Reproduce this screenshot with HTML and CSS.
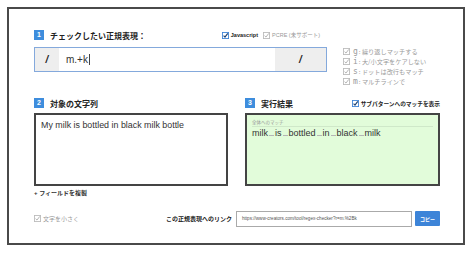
FILE: index.html
```html
<!DOCTYPE html>
<html lang="ja">
<head>
    <meta charset="UTF-8">
    <meta name="viewport" content="width=device-width, initial-scale=1.0">
    <title>正規表現チェッカー</title>
    <link rel="stylesheet" href="styles.css">
</head>
<body>
    <div class="panel">
        <!-- 1: 正規表現 -->
        <div class="top-row">
            <div class="sec1">
                <div class="sec-head">
                    <span class="badge">1</span>
                    <span class="head-title">チェックしたい正規表現：</span>
                    <span class="engines">
                        <label class="chk chk-on">
                            <svg viewBox="0 0 8 8"><rect x="0.5" y="0.5" width="7" height="7" fill="#fff" stroke="#3f84d6"/><path d="M1.8 4.2 L3.4 5.8 L6.6 1.6" fill="none" stroke="#1d3f6e" stroke-width="1.3"/></svg>
                            <b>Javascript</b>
                        </label>
                        <label class="chk chk-off">
                            <svg viewBox="0 0 8 8"><rect x="0.5" y="0.5" width="7" height="7" fill="#fff" stroke="#bbb"/><path d="M1.8 4.2 L3.4 5.8 L6.6 1.6" fill="none" stroke="#aaa" stroke-width="1"/></svg>
                            PCRE (未サポート)
                        </label>
                    </span>
                </div>
                <div class="regex-input">
                    <span class="slash">/</span>
                    <span class="regex-text">m.+k</span>
                    <span class="slash slash-right">/</span>
                </div>
            </div>
            <ul class="flags">
                <li><svg viewBox="0 0 8 8"><rect x="0.5" y="0.5" width="7" height="7" fill="#fff" stroke="#bbb"/><path d="M1.8 4.2 L3.4 5.8 L6.6 1.6" fill="none" stroke="#aaa" stroke-width="1"/></svg><span class="flag">g</span>: 繰り返しマッチする</li>
                <li><svg viewBox="0 0 8 8"><rect x="0.5" y="0.5" width="7" height="7" fill="#fff" stroke="#bbb"/><path d="M1.8 4.2 L3.4 5.8 L6.6 1.6" fill="none" stroke="#aaa" stroke-width="1"/></svg><span class="flag">i</span>: 大/小文字をケアしない</li>
                <li><svg viewBox="0 0 8 8"><rect x="0.5" y="0.5" width="7" height="7" fill="#fff" stroke="#bbb"/><path d="M1.8 4.2 L3.4 5.8 L6.6 1.6" fill="none" stroke="#aaa" stroke-width="1"/></svg><span class="flag">s</span>: ドットは改行もマッチ</li>
                <li><svg viewBox="0 0 8 8"><rect x="0.5" y="0.5" width="7" height="7" fill="#fff" stroke="#bbb"/><path d="M1.8 4.2 L3.4 5.8 L6.6 1.6" fill="none" stroke="#aaa" stroke-width="1"/></svg><span class="flag">m</span>: マルチラインで</li>
            </ul>
        </div>

        <!-- 2 / 3 -->
        <div class="mid-row">
            <div class="col">
                <div class="sec-head">
                    <span class="badge">2</span>
                    <span class="head-title">対象の文字列</span>
                </div>
                <div class="target-box">My milk is bottled in black milk bottle</div>
                <div class="dup">+ フィールドを複製</div>
            </div>
            <div class="col">
                <div class="sec-head">
                    <span class="badge">3</span>
                    <span class="head-title">実行結果</span>
                    <label class="chk chk-on sub-chk">
                        <svg viewBox="0 0 8 8"><rect x="0.5" y="0.5" width="7" height="7" fill="#fff" stroke="#3f84d6"/><path d="M1.8 4.2 L3.4 5.8 L6.6 1.6" fill="none" stroke="#1d3f6e" stroke-width="1.3"/></svg>
                        <b>サブパターンへのマッチを表示</b>
                    </label>
                </div>
                <div class="result-box">
                    <div class="result-label">全体へのマッチ</div>
                    <div class="result-text">milk<span class="sp"></span>is<span class="sp"></span>bottled<span class="sp"></span>in<span class="sp"></span>black<span class="sp"></span>milk</div>
                </div>
            </div>
        </div>

        <!-- 下部 -->
        <div class="bottom-row">
            <label class="chk chk-off small-chk">
                <svg viewBox="0 0 8 8"><rect x="0.5" y="0.5" width="7" height="7" fill="#fff" stroke="#bbb"/><path d="M1.8 4.2 L3.4 5.8 L6.6 1.6" fill="none" stroke="#aaa" stroke-width="1"/></svg>
                文字を小さく
            </label>
            <span class="link-label">この正規表現へのリンク</span>
            <span class="link-input">https://www-creators.com/tool/regex-checker?r=m.%2Bk</span>
            <span class="copy-btn">コピー</span>
        </div>
    </div>
</body>
</html>
```

FILE: styles.css
```css
* {
    box-sizing: border-box;
}

body {
    margin: 0;
    background-color: #fff;
    font-family: "Liberation Sans", "Noto Sans CJK JP", sans-serif;
    color: #222;
}

.panel {
    width: 458px;
    height: 238px;
    margin: 7px 0 0 7px;
    border: 2px solid #4a4a4a;
    padding: 21px 23px 0 25px;
}

/* 見出し */
.sec-head {
    display: flex;
    align-items: center;
    height: 10px;
}

.badge {
    width: 10px;
    height: 10px;
    background-color: #3e8ddd;
    color: #fff;
    font-size: 7px;
    font-weight: bold;
    line-height: 10px;
    text-align: center;
    margin-right: 6px;
}

.head-title {
    font-size: 8px;
    font-weight: bold;
    color: #222;
    white-space: nowrap;
}

/* チェックボックス */
.chk {
    display: inline-flex;
    align-items: center;
    font-size: 5.5px;
    white-space: nowrap;
}

.chk svg {
    width: 7px;
    height: 7px;
    margin-right: 2px;
}

.chk-on {
    color: #222;
}

.chk-off {
    color: #999;
}

.engines {
    margin-left: auto;
    margin-right: 7px;
    display: flex;
    gap: 5px;
}

/* 1 */
.top-row {
    display: flex;
    align-items: flex-start;
    gap: 16px;
    height: 42px;
}

.sec1 {
    width: 293px;
}

.regex-input {
    margin-top: 7px;
    height: 25px;
    border: 1px solid #84a9dc;
    display: flex;
    align-items: stretch;
    font-size: 10px;
}

.slash {
    width: 24px;
    background-color: #eeeeee;
    display: flex;
    align-items: center;
    justify-content: center;
    font-weight: bold;
    font-style: italic;
    color: #222;
}

.slash-right {
    width: 51px;
    margin-left: auto;
}

.regex-text {
    display: flex;
    align-items: center;
    padding-left: 7px;
    color: #333;
    border-right: 1px solid #444;
    padding-right: 1px;
    margin: 6px 0;
}

.flags {
    list-style: none;
    margin: 16px 0 0 0;
    padding: 0;
    font-size: 6.2px;
    color: #9a9a9a;
    font-family: "Noto Sans CJK JP", sans-serif;
}

.flags li {
    display: flex;
    align-items: center;
    height: 10px;
    white-space: nowrap;
}

.flags svg {
    width: 7px;
    height: 7px;
    margin-right: 3px;
}

.flag {
    font-family: "DejaVu Sans Mono", monospace;
    font-size: 8px;
    margin-right: 1px;
}

/* 2 / 3 */
.mid-row {
    display: flex;
    gap: 17px;
    margin-top: 26px;
}

.col {
    width: 195px;
}

.col:first-child {
    width: 194px;
}

.target-box {
    margin-top: 5px;
    height: 73px;
    border: 2px solid #444;
    padding: 5px 5px;
    font-size: 8.9px;
    color: #333;
}

.dup {
    margin-top: 3px;
    font-size: 6px;
    font-weight: bold;
    line-height: 8px;
    color: #333;
}

.sub-chk {
    margin-left: auto;
    font-size: 5.7px;
}

.result-box {
    margin-top: 5px;
    height: 73px;
    border: 2px solid #444;
    background-color: #e2fcda;
    padding: 4px 5px;
}

.result-label {
    font-size: 4.5px;
    color: #999;
    border-bottom: 1px solid #cfe8c9;
    padding-bottom: 1px;
}

.result-text {
    margin-top: 1px;
    font-size: 9px;
    color: #333;
}

.sp {
    display: inline-block;
    width: 5px;
    height: 1px;
    margin: 0 1px;
    background-color: #b5b5b5;
}

/* 下部 */
.bottom-row {
    display: flex;
    align-items: center;
    height: 17px;
    margin-top: 13px;
}

.small-chk {
    font-size: 6px;
}

.link-label {
    margin-left: auto;
    font-size: 6px;
    font-weight: bold;
    color: #222;
    margin-right: 4px;
}

.link-input {
    width: 176px;
    height: 16px;
    border: 1px solid #aaa;
    font-size: 4.6px;
    color: #555;
    display: flex;
    align-items: center;
    padding-left: 5px;
}

.copy-btn {
    width: 25px;
    height: 15px;
    margin-left: 3px;
    background-color: #3d84d8;
    color: #fff;
    font-size: 5px;
    font-weight: bold;
    display: flex;
    align-items: center;
    justify-content: center;
    border-radius: 1px;
}
```
